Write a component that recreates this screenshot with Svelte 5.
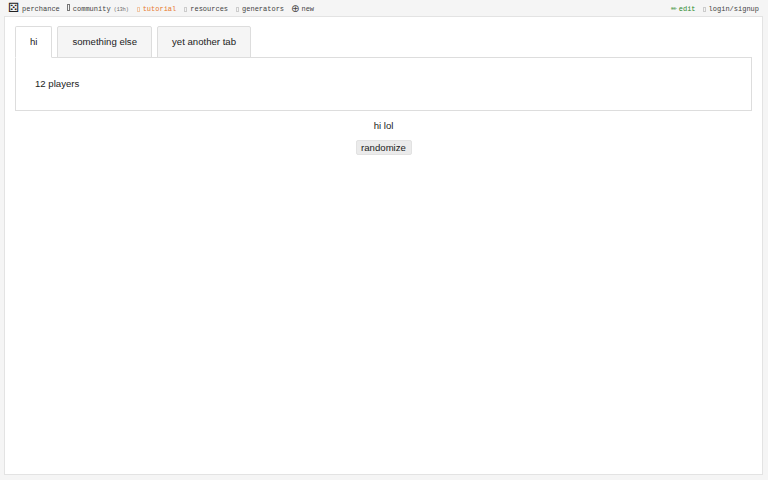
<script>
  const tabs = ['hi', 'something else', 'yet another tab'];
</script>

<div class="page">
  <nav class="topbar">
    <div class="links">
      <span class="item"><span class="dice">⚄</span><span class="label">perchance</span></span>
      <span class="item"><span class="tofu big"></span><span class="label">community</span><small>(13h)</small></span>
      <span class="item tutorial"><span class="tofu"></span><span class="label">tutorial</span></span>
      <span class="item"><span class="tofu"></span><span class="label">resources</span></span>
      <span class="item"><span class="tofu"></span><span class="label">generators</span></span>
      <span class="item"><span class="plus">⊕</span><span class="label tight">new</span></span>
    </div>
    <div class="links account">
      <span class="item edit"><span class="pencil">✏</span><span class="label tight">edit</span></span>
      <span class="item"><span class="tofu"></span><span class="label">login/signup</span></span>
    </div>
  </nav>
  <main class="sheet">
    <div class="tabs">
      {#each tabs as tab, i}
        <div class="tab" class:active={i === 0}>{tab}</div>
      {/each}
    </div>
    <div class="panel">12 players</div>
    <p class="line">hi lol</p>
    <div class="actions"><button>randomize</button></div>
  </main>
</div>

<style>
  :global(body) {
    margin: 0;
    background: #f5f5f5;
  }
  .page {
    height: 480px;
    display: flex;
    flex-direction: column;
    overflow: hidden;
    font-family: "Liberation Sans", Arial, sans-serif;
    color: #222;
  }
  .topbar {
    height: 16px;
    flex: none;
    box-sizing: border-box;
    padding: 2px 9px 0 8px;
    display: flex;
    justify-content: space-between;
    align-items: center;
    font-family: "Liberation Mono", monospace;
    font-size: 7px;
    color: #444;
  }
  .links {
    display: flex;
    align-items: center;
    gap: 7px;
  }
  .account {
    gap: 6px;
  }
  .item {
    display: flex;
    align-items: center;
    white-space: pre;
  }
  .label {
    margin-left: 3px;
  }
  .label.tight {
    margin-left: 2px;
  }
  small {
    font-size: 5px;
    margin-left: 3px;
    margin-top: 1px;
    color: #666;
  }
  .dice {
    width: 11px;
    font-size: 13px;
    line-height: 12px;
    margin-bottom: 2px;
    font-family: "DejaVu Sans", sans-serif;
    color: #222;
  }
  .tofu {
    width: 1px;
    height: 3px;
    border: 1px solid #ccc;
    margin-left: 1px;
  }
  .tofu.big {
    height: 5px;
    border-color: #777;
    margin-left: 0;
    margin-bottom: 3px;
  }
  .tutorial .tofu {
    border-color: #f0c8a8;
  }
  .plus {
    font-family: "DejaVu Sans", sans-serif;
    font-size: 10px;
    line-height: 8px;
    margin-bottom: 1px;
  }
  .tutorial {
    color: #e87a30;
  }
  .edit {
    color: #2a8a2a;
  }
  .pencil {
    font-family: "DejaVu Sans", sans-serif;
  }
  .sheet {
    flex: 1;
    margin: 0 5px 5px 4px;
    padding: 9px 10px 0;
    background: #fff;
    border: 1px solid #e3e3e3;
    box-sizing: border-box;
    min-height: 0;
    text-align: center;
    font-size: 9.6px;
  }
  .tabs {
    display: flex;
    gap: 5px;
    margin-bottom: -1px;
    position: relative;
  }
  .tab {
    height: 32px;
    box-sizing: border-box;
    padding: 0 14px 2px;
    display: flex;
    align-items: center;
    background: #f5f5f5;
    border: 1px solid #ddd;
    border-radius: 2px 2px 0 0;
    color: #222;
  }
  .tab.active {
    background: #fff;
    border-bottom-color: #fff;
  }
  .panel {
    height: 54px;
    box-sizing: border-box;
    padding: 0 19px 2px;
    display: flex;
    align-items: center;
    border: 1px solid #ddd;
    text-align: left;
  }
  .line {
    margin: 9px 0 0;
    line-height: 12px;
  }
  .actions {
    margin-top: 8px;
  }
  button {
    height: 15px;
    width: 56px;
    padding: 0;
    font: 9.6px "Liberation Sans", Arial, sans-serif;
    color: #222;
    background: #ebebeb;
    border: 1px solid #e2e2e2;
    border-radius: 2px;
  }
</style>
